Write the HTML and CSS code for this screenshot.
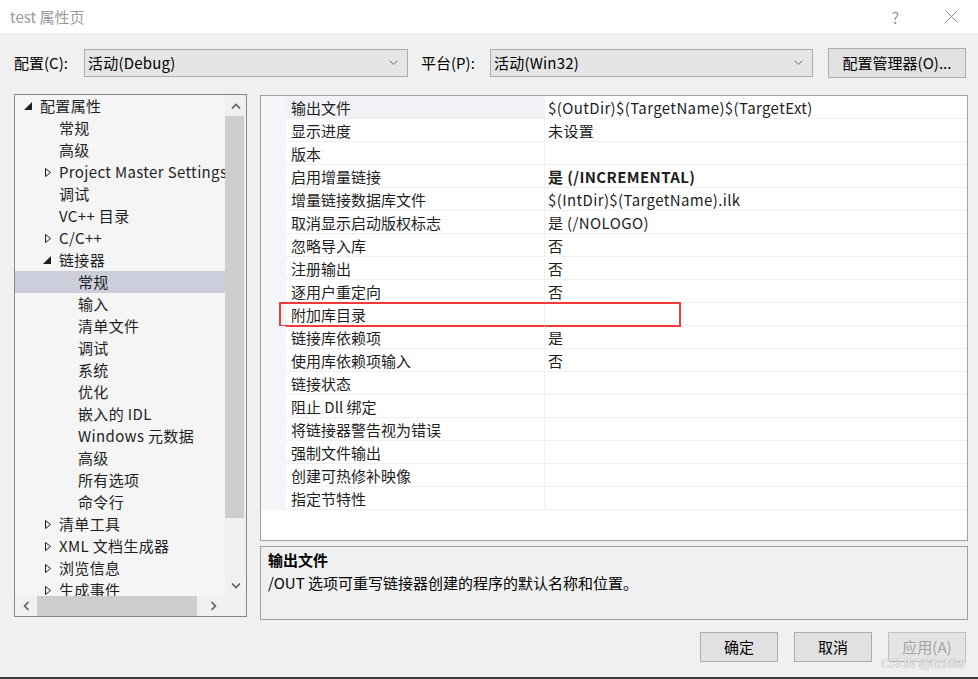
FILE: index.html
```html
<!DOCTYPE html>
<html lang="zh-CN">
<head>
    <meta charset="UTF-8">
    <title>test 属性页</title>
    <link rel="stylesheet" href="styles.css">
</head>
<body>
<div class="window">
    <div class="titlebar">
        <span class="title">test 属性页</span>
        <span class="help">?</span>
        <svg class="close" width="13" height="13" viewBox="0 0 13 13"><path d="M0.5 0.5 L12.5 12.5 M12.5 0.5 L0.5 12.5" stroke="#8a8a8a" stroke-width="1" fill="none"/></svg>
    </div>

    <div class="toolbar">
        <span class="lbl lbl-config">配置(C):</span>
        <div class="combo combo-config">
            <span>活动(Debug)</span>
            <svg width="9" height="5" viewBox="0 0 9 5"><path d="M0.5 0.5 L4.5 4.5 L8.5 0.5" stroke="#707070" fill="none"/></svg>
        </div>
        <span class="lbl lbl-platform">平台(P):</span>
        <div class="combo combo-platform">
            <span>活动(Win32)</span>
            <svg width="9" height="5" viewBox="0 0 9 5"><path d="M0.5 0.5 L4.5 4.5 L8.5 0.5" stroke="#707070" fill="none"/></svg>
        </div>
        <button class="btn btn-manager">配置管理器(O)...</button>
    </div>

    <div class="content">
        <!-- left tree -->
        <div class="tree">
            <div class="tree-top">
                <div class="tree-list">
                    <div class="node l0"><span class="tw"><svg width="8" height="8" viewBox="0 0 8 8"><polygon points="8,0 8,8 0,8" fill="#1e1e1e"/></svg></span>配置属性</div>
                    <div class="node l1"><span class="tw"></span>常规</div>
                    <div class="node l1"><span class="tw"></span>高级</div>
                    <div class="node l1"><span class="tw"><svg class="closed" width="6" height="9" viewBox="0 0 6 9"><polygon points="0.5,0.5 5.5,4.5 0.5,8.5" fill="none" stroke="#1e1e1e"/></svg></span>Project Master Settings</div>
                    <div class="node l1"><span class="tw"></span>调试</div>
                    <div class="node l1"><span class="tw"></span>VC++ 目录</div>
                    <div class="node l1"><span class="tw"><svg class="closed" width="6" height="9" viewBox="0 0 6 9"><polygon points="0.5,0.5 5.5,4.5 0.5,8.5" fill="none" stroke="#1e1e1e"/></svg></span>C/C++</div>
                    <div class="node l1"><span class="tw"><svg width="8" height="8" viewBox="0 0 8 8"><polygon points="8,0 8,8 0,8" fill="#1e1e1e"/></svg></span>链接器</div>
                    <div class="node l2 selected"><span class="tw"></span>常规</div>
                    <div class="node l2"><span class="tw"></span>输入</div>
                    <div class="node l2"><span class="tw"></span>清单文件</div>
                    <div class="node l2"><span class="tw"></span>调试</div>
                    <div class="node l2"><span class="tw"></span>系统</div>
                    <div class="node l2"><span class="tw"></span>优化</div>
                    <div class="node l2"><span class="tw"></span>嵌入的 IDL</div>
                    <div class="node l2"><span class="tw"></span>Windows 元数据</div>
                    <div class="node l2"><span class="tw"></span>高级</div>
                    <div class="node l2"><span class="tw"></span>所有选项</div>
                    <div class="node l2"><span class="tw"></span>命令行</div>
                    <div class="node l1"><span class="tw"><svg class="closed" width="6" height="9" viewBox="0 0 6 9"><polygon points="0.5,0.5 5.5,4.5 0.5,8.5" fill="none" stroke="#1e1e1e"/></svg></span>清单工具</div>
                    <div class="node l1"><span class="tw"><svg class="closed" width="6" height="9" viewBox="0 0 6 9"><polygon points="0.5,0.5 5.5,4.5 0.5,8.5" fill="none" stroke="#1e1e1e"/></svg></span>XML 文档生成器</div>
                    <div class="node l1"><span class="tw"><svg class="closed" width="6" height="9" viewBox="0 0 6 9"><polygon points="0.5,0.5 5.5,4.5 0.5,8.5" fill="none" stroke="#1e1e1e"/></svg></span>浏览信息</div>
                    <div class="node l1 last"><span class="tw"><svg class="closed" width="6" height="9" viewBox="0 0 6 9"><polygon points="0.5,0.5 5.5,4.5 0.5,8.5" fill="none" stroke="#1e1e1e"/></svg></span>生成事件</div>
                </div>
                <div class="vscroll">
                    <div class="sb-btn"><svg width="10" height="6" viewBox="0 0 10 6"><path d="M1 5.5 L5 1.5 L9 5.5" stroke="#606060" stroke-width="1.6" fill="none"/></svg></div>
                    <div class="vthumb"></div>
                    <div class="sb-track"></div>
                    <div class="sb-btn"><svg width="10" height="6" viewBox="0 0 10 6"><path d="M1 0.5 L5 4.5 L9 0.5" stroke="#606060" stroke-width="1.6" fill="none"/></svg></div>
                </div>
            </div>
            <div class="hscroll">
                <div class="sb-btn h"><svg width="6" height="10" viewBox="0 0 6 10"><path d="M5.5 1 L1.5 5 L5.5 9" stroke="#606060" stroke-width="1.6" fill="none"/></svg></div>
                <div class="hthumb"></div>
                <div class="sb-track"></div>
                <div class="sb-btn h"><svg width="6" height="10" viewBox="0 0 6 10"><path d="M0.5 1 L4.5 5 L0.5 9" stroke="#606060" stroke-width="1.6" fill="none"/></svg></div>
                <div class="corner"></div>
            </div>
        </div>

        <!-- right side -->
        <div class="right">
            <div class="grid">
                <div class="row current"><div class="gut"></div><div class="name">输出文件</div><div class="val">$(OutDir)$(TargetName)$(TargetExt)</div></div>
                <div class="row"><div class="gut"></div><div class="name">显示进度</div><div class="val">未设置</div></div>
                <div class="row"><div class="gut"></div><div class="name">版本</div><div class="val"></div></div>
                <div class="row"><div class="gut"></div><div class="name">启用增量链接</div><div class="val bold">是 (/INCREMENTAL)</div></div>
                <div class="row"><div class="gut"></div><div class="name">增量链接数据库文件</div><div class="val">$(IntDir)$(TargetName).ilk</div></div>
                <div class="row"><div class="gut"></div><div class="name">取消显示启动版权标志</div><div class="val">是 (/NOLOGO)</div></div>
                <div class="row"><div class="gut"></div><div class="name">忽略导入库</div><div class="val">否</div></div>
                <div class="row"><div class="gut"></div><div class="name">注册输出</div><div class="val">否</div></div>
                <div class="row"><div class="gut"></div><div class="name">逐用户重定向</div><div class="val">否</div></div>
                <div class="row marked"><div class="gut"></div><div class="name">附加库目录</div><div class="val"></div><div class="redbox"></div></div>
                <div class="row"><div class="gut"></div><div class="name">链接库依赖项</div><div class="val">是</div></div>
                <div class="row"><div class="gut"></div><div class="name">使用库依赖项输入</div><div class="val">否</div></div>
                <div class="row"><div class="gut"></div><div class="name">链接状态</div><div class="val"></div></div>
                <div class="row"><div class="gut"></div><div class="name">阻止 Dll 绑定</div><div class="val"></div></div>
                <div class="row"><div class="gut"></div><div class="name">将链接器警告视为错误</div><div class="val"></div></div>
                <div class="row"><div class="gut"></div><div class="name">强制文件输出</div><div class="val"></div></div>
                <div class="row"><div class="gut"></div><div class="name">创建可热修补映像</div><div class="val"></div></div>
                <div class="row"><div class="gut"></div><div class="name">指定节特性</div><div class="val"></div></div>
            </div>
            <div class="desc">
                <div class="desc-title">输出文件</div>
                <div class="desc-text">/OUT 选项可重写链接器创建的程序的默认名称和位置。</div>
            </div>
        </div>
    </div>

    <div class="buttons">
        <button class="btn">确定</button>
        <button class="btn">取消</button>
        <button class="btn disabled">应用(A)</button>
    </div>
    <div class="watermark">CSDN @hxhflw</div>
</div>
</body>
</html>
```

FILE: styles.css
```css
body {
    margin: 0;
    width: 978px;
    height: 679px;
    overflow: hidden;
    background-color: #f0f0f0;
    font-family: "Noto Sans CJK SC", sans-serif;
    font-size: 15px;
    color: #1e1e1e;
}
.window {
    position: relative;
    height: 677px;
    border-bottom: 2px solid #3a3a3a;
    display: flex;
    flex-direction: column;
}
.titlebar {
    height: 33px;
    background-color: #fff;
    display: flex;
    align-items: center;
    padding-left: 10px;
    flex-shrink: 0;
}
.title {
    color: #9a9a9a;
    font-size: 15px;
    line-height: 20px;
    flex: 1;
}
.help {
    color: #9a9a9a;
    font-size: 16px;
    line-height: 20px;
    margin-right: 46px;
}
.close {
    margin-right: 20px;
}

/* toolbar */
.toolbar {
    display: flex;
    align-items: center;
    margin-top: 14px;
    height: 31px;
    padding-left: 14px;
}
.lbl {
    color: #000;
    line-height: 20px;
}
.lbl-config {
    width: 70px;
}
.lbl-platform {
    width: 69px;
    margin-left: 13px;
}
.combo {
    height: 28px;
    border: 1px solid #acacac;
    background-color: #e5e5e5;
    display: flex;
    align-items: center;
    justify-content: space-between;
    padding: 0 9px 0 3px;
    box-sizing: border-box;
    color: #000;
}
.combo span {
    line-height: 20px;
    letter-spacing: 0.2px;
}
.combo-config {
    width: 324px;
}
.combo-platform {
    width: 323px;
}
.btn {
    font-family: inherit;
    font-size: 15px;
    color: #000;
    background-color: #e1e1e1;
    border: 1px solid #adadad;
    padding: 0;
    height: 30px;
    line-height: 20px;
}
.btn-manager {
    margin-left: 15px;
    width: 138px;
}

/* content */
.content {
    display: flex;
    align-items: flex-start;
    margin-top: 16px;
    padding-left: 14px;
}
.tree {
    width: 233px;
    height: 523px;
    border: 1px solid #828790;
    box-sizing: border-box;
    background-color: #f5f5f5;
    display: flex;
    flex-direction: column;
}
.tree-top {
    display: flex;
    height: 501px;
}
.tree-list {
    flex: 1;
    overflow: hidden;
    letter-spacing: 0.35px;
}
.node {
    height: 22px;
    line-height: 22px;
    white-space: nowrap;
    display: flex;
    align-items: center;
}
.node.l0 { padding-left: 5px; }
.node.l1 { padding-left: 24px; }
.node.l2 { padding-left: 43px; }
.node.selected {
    background-color: #cccedb;
}
.node.last {
    align-items: flex-start;
}
.tw {
    width: 20px;
    height: 22px;
    flex-shrink: 0;
    display: flex;
    align-items: center;
    padding-left: 4px;
    box-sizing: border-box;
}
.tw .closed {
    margin-left: 2px;
}
.vscroll {
    width: 21px;
    display: flex;
    flex-direction: column;
    background-color: #f0f0f0;
}
.sb-btn {
    height: 21px;
    display: flex;
    align-items: center;
    justify-content: center;
    flex-shrink: 0;
}
.vthumb {
    height: 402px;
    width: 19px;
    background-color: #cdcdcd;
}
.sb-track {
    flex: 1;
}
.hscroll {
    height: 20px;
    display: flex;
    background-color: #f0f0f0;
}
.sb-btn.h {
    width: 22px;
    height: 20px;
}
.hthumb {
    width: 160px;
    background-color: #cdcdcd;
}
.corner {
    width: 21px;
}

/* property grid */
.right {
    margin-left: 13px;
    width: 708px;
}
.grid {
    margin-top: 1px;
    height: 446px;
    border: 1px solid #a0a0a0;
    box-sizing: border-box;
    background-color: #fff;
}
.row {
    position: relative;
    display: flex;
    height: 23px;
}
.gut {
    width: 25px;
    background-color: #f3f5f9;
}
.name {
    width: 259px;
    box-sizing: border-box;
    padding-left: 5px;
    line-height: 23px;
    border-bottom: 1px solid #f0f0f0;
    border-right: 1px solid #f0f0f0;
    white-space: nowrap;
}
.val {
    flex: 1;
    padding-left: 3px;
    line-height: 23px;
    border-bottom: 1px solid #f0f0f0;
    white-space: nowrap;
    letter-spacing: 0.38px;
}
.bold {
    font-weight: bold;
}
.row.current .name {
    background-color: #f1f2f5;
}
.redbox {
    position: absolute;
    left: 18px;
    top: -1px;
    width: 402px;
    height: 25px;
    border: 2px solid #f23a3a;
    box-sizing: border-box;
}
.desc {
    margin-top: 5px;
    height: 74px;
    border: 1px solid #a0a0a0;
    box-sizing: border-box;
    padding: 2px 7px;
    color: #000;
}
.desc-title {
    font-weight: bold;
    line-height: 22px;
}
.desc-text {
    line-height: 22px;
    margin-top: 1px;
}

/* bottom buttons */
.buttons {
    display: flex;
    justify-content: flex-end;
    gap: 16px;
    margin-top: 12px;
    padding-right: 12px;
}
.buttons .btn {
    width: 78px;
}
.buttons .btn.disabled {
    color: #a3a3a3;
    border-color: #bfbfbf;
    background-color: #e4e4e4;
}
.watermark {
    position: absolute;
    right: 13px;
    bottom: 6px;
    font-family: "Liberation Sans", sans-serif;
    font-size: 12px;
    color: #fff;
    text-shadow: 0 0 1px #8a8a8a, 0 0 1px #8a8a8a;
    opacity: 0.85;
}
```
